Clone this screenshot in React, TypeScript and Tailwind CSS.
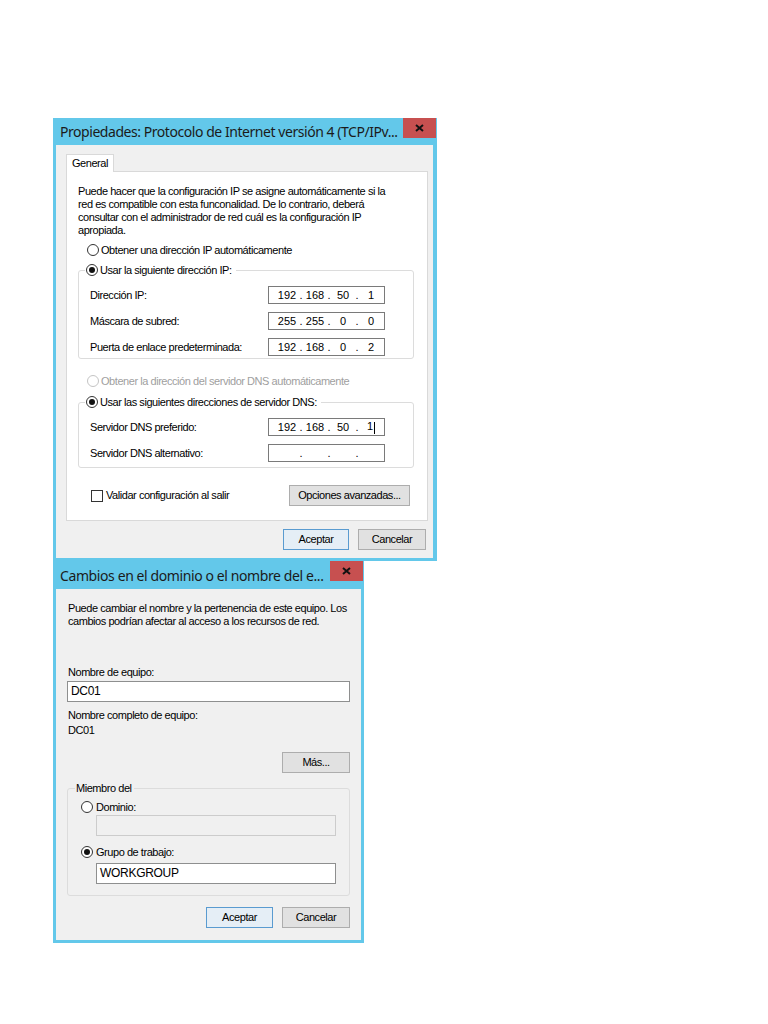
const body = 'font-["Liberation_Sans","Noto_Sans",sans-serif] text-[11px] leading-[13px] tracking-[-0.45px]'
const title = 'font-["Noto_Sans","Liberation_Sans",sans-serif] text-[14px] text-[#1b1b1b]'

function CloseButton() {
  return (
    <div className="absolute top-0 right-[1px] flex h-[20px] w-[33px] items-center justify-center bg-[#c75050]">
      <svg width="9" height="8" viewBox="0 0 9 8">
        <path d="M1 1 L8 7 M8 1 L1 7" stroke="#111" strokeWidth="2" />
      </svg>
    </div>
  )
}

function Radio({ checked, disabled }: { checked?: boolean; disabled?: boolean }) {
  return (
    <span
      className={`flex h-[12px] w-[12px] shrink-0 items-center justify-center rounded-full border bg-white ${
        disabled ? 'border-[#c4c4c4]' : 'border-[#333]'
      }`}
    >
      {checked && <span className="h-[6px] w-[6px] rounded-full bg-[#111]" />}
    </span>
  )
}

function Button({ label, primary, width }: { label: string; primary?: boolean; width: string }) {
  return (
    <div
      className={`flex h-[21px] items-center justify-center border ${width} ${
        primary ? 'border-[#5a9bd0] bg-[#e5eef6]' : 'border-[#adadad] bg-[#e1e1e1]'
      }`}
    >
      {label}
    </div>
  )
}

function IpField({ parts, cursor }: { parts: string[]; cursor?: boolean }) {
  return (
    <div className="flex h-[18px] w-[117px] items-center border border-[#7a7a7a] bg-white pl-[7px] tracking-normal">
      {parts.map((p, i) => (
        <div key={i} className="flex items-center">
          <span className="w-[22px] text-center">
            {p}
            {cursor && i === 3 && <span className="ml-[1px] inline-block h-[12px] border-l border-black align-middle" />}
          </span>
          {i < 3 && <span className="w-[6px] text-center">.</span>}
        </div>
      ))}
    </div>
  )
}

function IpRow({ label, parts, cursor }: { label: string; parts: string[]; cursor?: boolean }) {
  return (
    <div className="flex h-[18px] items-center">
      <span className="flex-1">{label}</span>
      <IpField parts={parts} cursor={cursor} />
    </div>
  )
}

function TcpIpDialog() {
  return (
    <div className="relative w-[384px] bg-[#63c8ea] px-[3px] pb-[3px] pr-[4px]">
      <div className={`flex h-[27px] items-center pl-[4px] tracking-[-0.45px] ${title}`}>
        Propiedades: Protocolo de Internet versión 4 (TCP/IPv...
      </div>
      <CloseButton />
      <div className={`bg-[#f0f0f0] pt-[9px] pl-[10px] pr-[5px] pb-[8px] ${body}`}>
        <div className="flex">
          <div className="relative z-10 -mb-px flex h-[18px] w-[48px] items-center justify-center border border-b-0 border-[#d9d9d9] bg-white">
            General
          </div>
        </div>
        <div className="h-[350px] border border-[#d9d9d9] bg-white px-[11px] pt-[13px]">
          <p>
            <span className="block">Puede hacer que la configuración IP se asigne automáticamente si la</span>
            <span className="block">red es compatible con esta funconalidad. De lo contrario, deberá</span>
            <span className="block">consultar con el administrador de red cuál es la configuración IP</span>
            <span className="block">apropiada.</span>
          </p>
          <div className="mt-[5px] ml-[9px] flex h-[16px] items-center gap-[2px]">
            <Radio />
            <span>Obtener una dirección IP automáticamente</span>
          </div>
          <fieldset className="mt-[4px] mr-[2px] rounded-[3px] border border-[#dcdcdc] p-0">
            <legend className="ml-[6px] flex h-[16px] items-center gap-[2px] px-[1px] pr-[4px]">
              <Radio checked />
              <span>Usar la siguiente dirección IP:</span>
            </legend>
            <div className="flex flex-col gap-[8px] pt-[8px] pr-[28px] pb-[2px] pl-[11px]">
              <IpRow label="Dirección IP:" parts={['192', '168', '50', '1']} />
              <IpRow label="Máscara de subred:" parts={['255', '255', '0', '0']} />
              <IpRow label="Puerta de enlace predeterminada:" parts={['192', '168', '0', '2']} />
            </div>
          </fieldset>
          <div className="mt-[14px] ml-[9px] flex h-[16px] items-center gap-[2px] text-[#a0a0a0]">
            <Radio disabled />
            <span>Obtener la dirección del servidor DNS automáticamente</span>
          </div>
          <fieldset className="mt-[5px] mr-[2px] rounded-[3px] border border-[#dcdcdc] p-0">
            <legend className="ml-[6px] flex h-[16px] items-center gap-[2px] px-[1px] pr-[4px]">
              <Radio checked />
              <span>Usar las siguientes direcciones de servidor DNS:</span>
            </legend>
            <div className="flex flex-col gap-[8px] pt-[8px] pr-[28px] pb-[5px] pl-[11px]">
              <IpRow label="Servidor DNS preferido:" parts={['192', '168', '50', '1']} cursor />
              <IpRow label="Servidor DNS alternativo:" parts={['', '', '', '']} />
            </div>
          </fieldset>
          <div className="mt-[17px] mr-[6px] ml-[13px] flex items-center">
            <span className="h-[12px] w-[12px] border border-[#333] bg-white" />
            <span className="ml-[3px] flex-1">Validar configuración al salir</span>
            <Button label="Opciones avanzadas..." width="w-[121px]" />
          </div>
        </div>
        <div className="mt-[8px] flex justify-end gap-[9px] pr-[2px]">
          <Button label="Aceptar" primary width="w-[66px]" />
          <Button label="Cancelar" width="w-[68px]" />
        </div>
      </div>
    </div>
  )
}

function TextBox({ value, disabled }: { value?: string; disabled?: boolean }) {
  return (
    <div
      className={`flex h-[21px] w-full items-center border px-[3px] text-[12px] tracking-[-0.3px] ${
        disabled ? 'border-[#cccccc] bg-[#f0f0f0]' : 'border-[#8e8f8f] bg-white'
      }`}
    >
      {value}
    </div>
  )
}

function DomainDialog() {
  return (
    <div className="relative w-[311px] bg-[#63c8ea] px-[3px] pb-[3px]">
      <div className={`flex h-[28px] items-center pl-[4px] tracking-[-0.4px] ${title}`}>
        Cambios en el dominio o el nombre del e...
      </div>
      <CloseButton />
      <div className={`bg-[#f0f0f0] px-[11px] pt-[13px] pb-[12px] ${body}`}>
        <p className="pl-[1px]">
          <span className="block">Puede cambiar el nombre y la pertenencia de este equipo. Los</span>
          <span className="block">cambios podrían afectar al acceso a los recursos de red.</span>
        </p>
        <div className="mt-[38px] pl-[1px]">Nombre de equipo:</div>
        <div className="mt-[2px]">
          <TextBox value="DC01" />
        </div>
        <div className="mt-[7px] pl-[1px]">Nombre completo de equipo:</div>
        <div className="mt-[2px] pl-[1px]">DC01</div>
        <div className="mt-[15px] flex justify-end">
          <Button label="Más..." width="w-[68px]" />
        </div>
        <fieldset className="mt-[8px] rounded-[3px] border border-[#dcdcdc] p-0">
          <legend className="ml-[7px] flex h-[14px] items-center px-[1px] pr-[2px]">Miembro del</legend>
          <div className="pt-[4px] pr-[13px] pb-[11px] pl-[13px]">
            <div className="flex h-[16px] items-center gap-[3px]">
              <Radio />
              <span>Dominio:</span>
            </div>
            <div className="pl-[15px]">
              <TextBox disabled />
            </div>
            <div className="mt-[8px] flex h-[16px] items-center gap-[3px]">
              <Radio checked />
              <span>Grupo de trabajo:</span>
            </div>
            <div className="mt-[3px] pl-[15px]">
              <TextBox value="WORKGROUP" />
            </div>
          </div>
        </fieldset>
        <div className="mt-[11px] flex justify-end gap-[9px]">
          <Button label="Aceptar" primary width="w-[67px]" />
          <Button label="Cancelar" width="w-[68px]" />
        </div>
      </div>
    </div>
  )
}

export default function App() {
  return (
    <div className="min-h-[1024px] w-[768px] bg-white pt-[118px] pl-[53px] text-black">
      <TcpIpDialog />
      <DomainDialog />
    </div>
  )
}
